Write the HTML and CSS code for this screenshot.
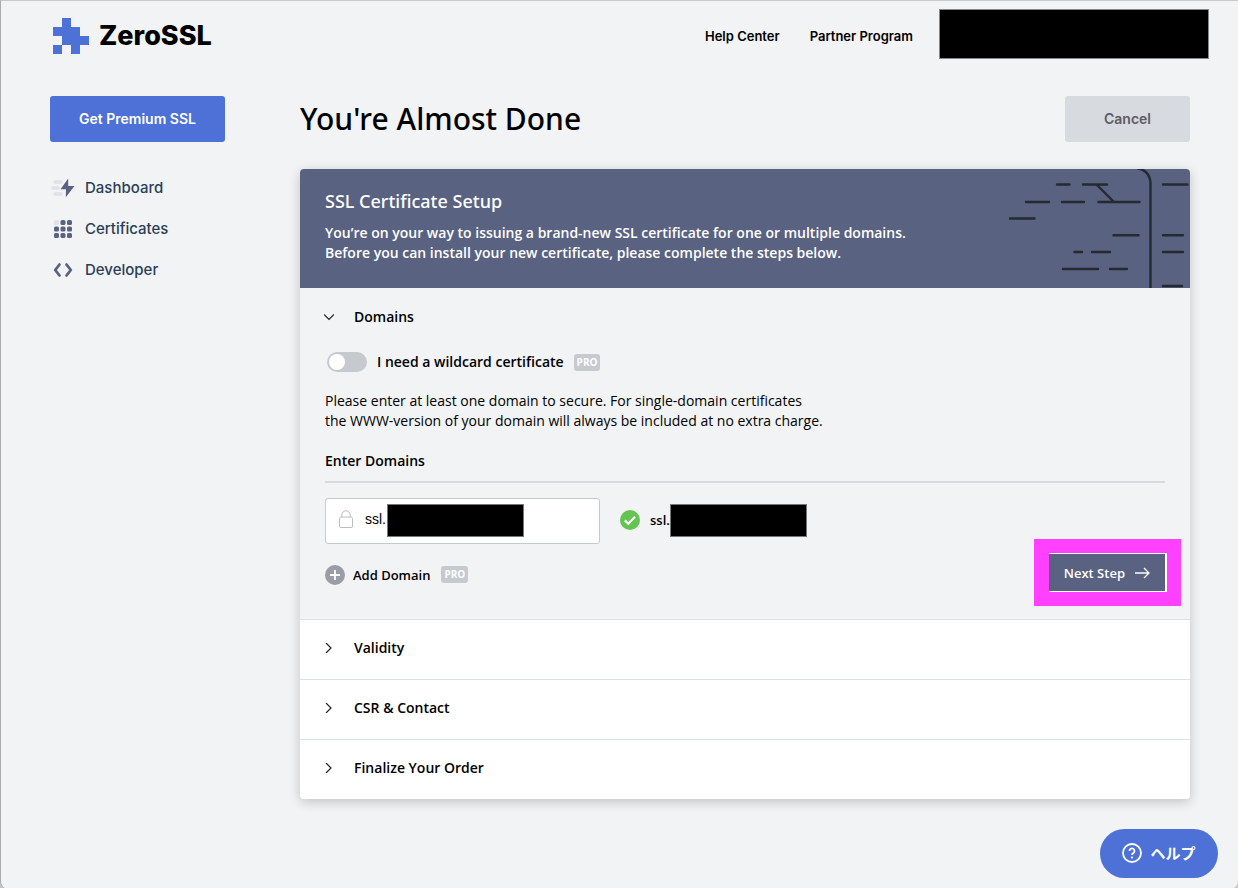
FILE: index.html
```
<!DOCTYPE html>
<html lang="en">
<head>
    <meta charset="UTF-8">
    <meta name="viewport" content="width=device-width, initial-scale=1.0">
    <link rel="stylesheet" href="styles.css">
    <title>ZeroSSL</title>
</head>
<body>
    <div class="window">
        <header class="topbar">
            <a href="#" class="logo">
                <svg width="37" height="36" viewBox="0 0 36 36" fill="#4d71d6" shape-rendering="crispEdges" aria-hidden="true">
                    <path d="M9 0h9v9h9v9h9v9h-9v9h-9v-9H9v-9H0V9h9zM0 27h9v9H0z"/>
                </svg>
                <span>ZeroSSL</span>
            </a>
            <nav class="top-nav">
                <a href="#">Help Center</a>
                <a href="#">Partner Program</a>
            </nav>
            <div class="account"></div>
        </header>

        <div class="content">
            <aside class="sidebar">
                <button class="btn btn-premium">Get Premium SSL</button>
                <nav class="side-nav">
                    <a href="#">
                        <svg width="24" height="20" viewBox="0 0 24 20" aria-hidden="true">
                            <path d="M4 4h6M2 10h5M4 16h6" stroke="#dee1e7" stroke-width="3.4" stroke-linecap="round"/>
                            <path d="M17.200 .5 9.500 11.200h5.500L14.800 19.200 23.500 8h-6.300z" fill="#596280"/>
                        </svg>
                        Dashboard
                    </a>
                    <a href="#">
                        <svg width="24" height="20" viewBox="0 0 24 20" fill="#596280" aria-hidden="true">
                            <rect x="3" y="1" width="5" height="5" rx="1.600" fill="#dee1e7"/>
                            <rect x="9.500" y="1" width="5" height="5" rx="1.600"/>
                            <rect x="16" y="1" width="5" height="5" rx="1.600"/>
                            <rect x="3" y="7.500" width="5" height="5" rx="1.600"/>
                            <rect x="9.500" y="7.500" width="5" height="5" rx="1.600"/>
                            <rect x="16" y="7.500" width="5" height="5" rx="1.600"/>
                            <rect x="3" y="14" width="5" height="5" rx="1.600"/>
                            <rect x="9.500" y="14" width="5" height="5" rx="1.600"/>
                            <rect x="16" y="14" width="5" height="5" rx="1.600"/>
                        </svg>
                        Certificates
                    </a>
                    <a href="#">
                        <svg width="24" height="20" viewBox="0 0 24 20" fill="none" stroke="#596280" stroke-width="2.800" stroke-linecap="round" stroke-linejoin="round" aria-hidden="true">
                            <path d="M8.500 4.500 4.200 10l4.300 5.500M15.500 4.500l4.300 5.500-4.300 5.500"/>
                        </svg>
                        Developer
                    </a>
                </nav>
            </aside>

            <main class="main">
                <div class="page-head">
                    <h1>You're Almost Done</h1>
                    <button class="btn btn-cancel">Cancel</button>
                </div>

                <section class="card">
                    <div class="card-head">
                        <svg class="card-art" width="190" height="119" viewBox="1000 169 190 119" fill="none" stroke="#252a31" stroke-width="2.400" stroke-linecap="round" aria-hidden="true">
                            <path d="M1057 184.500h12.500M1083 184.500h24M1163 184.500h24.500M1026 202h23M1062 202h22M1098.500 202h41M1010 218.500h24.500M1113.500 235.300h25M1163 235.300h20M1074.500 252h7.500M1092 252h18M1163 252h20M1063 269h35M1110 269h17M1163 286h19M1097 185l16.500 16.500"/>
                            <path d="M1138 168.500c7.500 1 12.500 7 12.500 15V290"/>
                        </svg>
                        <h2>SSL Certificate Setup</h2>
                        <p>You’re on your way to issuing a brand-new SSL certificate for one or multiple domains.<br>Before you can install your new certificate, please complete the steps below.</p>
                    </div>

                    <div class="step step-open">
                        <button class="step-title">
                            <svg width="10" height="10" viewBox="0 0 10 10" fill="none" stroke="#222" stroke-width="1.200" aria-hidden="true"><path d="M0 2.500l5 5 5-5"/></svg>
                            Domains
                        </button>
                        <div class="step-body">
                            <div class="wildcard">
                                <input type="checkbox" id="wildcard" class="toggle">
                                <label for="wildcard">I need a wildcard certificate</label>
                                <span class="pro">PRO</span>
                            </div>
                            <p class="hint">Please enter at least one domain to secure. For single-domain certificates<br>the WWW-version of your domain will always be included at no extra charge.</p>
                            <label class="field-title" for="domain">Enter Domains</label>
                            <div class="domain-row">
                                <div class="domain-field">
                                    <svg class="lock" width="14" height="18" viewBox="0 0 14 18" fill="none" stroke="#b9bcc7" aria-hidden="true">
                                        <rect x=".5" y="7" width="13" height="10.500" rx="1.500"/>
                                        <path d="M2.800 7V5a4.200 4.200 0 0 1 8.400 0v2"/>
                                    </svg>
                                    <input type="text" id="domain" value="ssl.">
                                    <span class="mask"></span>
                                </div>
                                <div class="domain-valid">
                                    <svg width="20" height="20" viewBox="0 0 20 20" fill="none" aria-hidden="true">
                                        <circle cx="10" cy="10" r="10" fill="#63c452"/>
                                        <path d="M4.800 10.400l3.500 3.400 6.700-7" stroke="#fff" stroke-width="2.200"/>
                                    </svg>
                                    <span>ssl.</span>
                                    <span class="mask"></span>
                                </div>
                            </div>
                            <div class="step-actions">
                                <div class="add-domain">
                                    <button class="btn-add">
                                        <svg width="20" height="20" viewBox="0 0 20 20" fill="none" aria-hidden="true">
                                            <circle cx="10" cy="10" r="10" fill="#9a9da5"/>
                                            <path d="M10 5v10M5 10h10" stroke="#fff" stroke-width="1.800"/>
                                        </svg>
                                        Add Domain
                                    </button>
                                    <span class="pro">PRO</span>
                                </div>
                                <button class="btn-next">
                                    Next Step
                                    <svg width="15" height="12" viewBox="0 0 15 12" fill="none" stroke="#fff" stroke-width="1.300" aria-hidden="true"><path d="M0 6h14M9 1l5 5-5 5"/></svg>
                                </button>
                            </div>
                        </div>
                    </div>

                    <div class="step">
                        <button class="step-title">
                            <svg width="10" height="10" viewBox="0 0 10 10" fill="none" stroke="#222" stroke-width="1.200" aria-hidden="true"><path d="M2 0l5 5-5 5"/></svg>
                            Validity
                        </button>
                    </div>
                    <div class="step">
                        <button class="step-title">
                            <svg width="10" height="10" viewBox="0 0 10 10" fill="none" stroke="#222" stroke-width="1.200" aria-hidden="true"><path d="M2 0l5 5-5 5"/></svg>
                            CSR &amp; Contact
                        </button>
                    </div>
                    <div class="step">
                        <button class="step-title">
                            <svg width="10" height="10" viewBox="0 0 10 10" fill="none" stroke="#222" stroke-width="1.200" aria-hidden="true"><path d="M2 0l5 5-5 5"/></svg>
                            Finalize Your Order
                        </button>
                    </div>
                </section>
            </main>
        </div>
    </div>

    <button class="help" lang="ja">
        <svg width="20" height="20" viewBox="0 0 20 20" fill="none" stroke="#fff" stroke-width="1.800" aria-hidden="true">
            <circle cx="10" cy="10" r="9"/>
            <path d="M7.500 8a2.500 2.500 0 1 1 3.800 2.100c-.9.500-1.300.9-1.300 1.900"/>
            <circle cx="10" cy="14.500" r="1.100" fill="#fff" stroke="none"/>
        </svg>
        ヘルプ
    </button>
</body>
</html>
```
FILE: styles.css
```
* {
    box-sizing: border-box;
}

body {
    margin: 0;
    background-color: #c5c6c9;
    font-family: 'Open Sans', sans-serif;
    font-size: 14px;
    line-height: 20px;
    color: #000;
}

button {
    font-family: inherit;
    border: none;
    cursor: pointer;
}

a {
    text-decoration: none;
}

h1, h2, p {
    margin: 0;
}

h1, h2 {
    font-family: 'Noto Sans', 'Open Sans', sans-serif;
    font-weight: 500;
}

svg {
    flex-shrink: 0;
}

.window {
    min-height: 100vh;
    background-color: #f1f3f5;
    border-top: 1px solid #c9cacc;
    border-left: 1px solid #a9aaad;
    border-radius: 0 0 8px 8px;
}

/* top bar */
.topbar {
    display: flex;
    align-items: center;
    padding: 8px 29px 0 51px;
    height: 62px;
    font-family: Inter, sans-serif;
}

.logo {
    display: flex;
    align-items: center;
    gap: 10px;
    margin-right: auto;
    color: #000;
    font-size: 27px;
    font-weight: 800;
}

.top-nav {
    display: flex;
    gap: 30px;
    margin-right: 26px;
}

.top-nav a {
    color: #000;
    font-size: 13px;
    font-weight: 600;
}

.account {
    align-self: flex-start;
    width: 270px;
    height: 50px;
    background-color: #000;
    border: 1px solid #888;
}

/* layout */
.content {
    display: flex;
    gap: 75px;
    padding: 33px 48px 90px 49px;
}

.sidebar {
    flex: 0 0 175px;
    font-family: Inter, sans-serif;
}

.main {
    flex: 1;
    min-width: 0;
}

.btn {
    height: 46px;
    padding: 0 0 2px;
    border-radius: 3px;
    font-family: Inter, sans-serif;
    font-size: 14px;
    font-weight: 600;
}

.btn-premium {
    width: 100%;
    background-color: #4d71d6;
    color: #fff;
}

.btn-cancel {
    width: 125px;
    background-color: #d7dadf;
    color: #5b5d62;
}

.side-nav {
    margin-top: 25px;
}

.side-nav a {
    display: flex;
    align-items: center;
    gap: 10px;
    height: 41px;
    padding-left: 1px;
    color: #2b3e55;
    font-size: 15px;
    font-weight: 500;
}

.page-head {
    display: flex;
    justify-content: space-between;
    align-items: center;
    margin-bottom: 27px;
}

h1 {
    font-size: 30px;
    line-height: 44px;
}

/* card */
.card {
    border-radius: 4px;
    background-color: #fff;
    box-shadow: 0 3px 12px rgba(0, 0, 0, 0.2);
    overflow: hidden;
}

.card-head {
    position: relative;
    padding: 20px 25px 25px;
    background-color: #596280;
    color: #fff;
}

.card-art {
    position: absolute;
    top: 0;
    right: 0;
}

.card-head h2 {
    margin-bottom: 9px;
    font-size: 18px;
    line-height: 25px;
}

.card-head p {
    font-weight: 600;
}

.step {
    border-top: 1px solid #dce0e7;
}

.step-title {
    display: flex;
    align-items: center;
    gap: 20px;
    width: 100%;
    height: 59px;
    padding: 0 25px 4px 24px;
    background: none;
    color: #000;
    font-size: 14px;
    font-weight: 600;
}

.step-open {
    border-top: none;
    background-color: #f1f3f5;
}

.step-open .step-title {
    padding-bottom: 2px;
}

.step-body {
    padding: 5px 25px 28px;
}

.wildcard {
    display: flex;
    align-items: center;
    gap: 10px;
    margin-bottom: 19px;
    padding-left: 2px;
    font-weight: 600;
}

.toggle {
    appearance: none;
    width: 40px;
    height: 20px;
    margin: 0;
    padding: 2px;
    border-radius: 10px;
    background-color: #c6c9cd;
}

.toggle::before {
    content: "";
    display: block;
    width: 16px;
    height: 16px;
    border-radius: 50%;
    background-color: #fff;
}

.toggle:checked::before {
    margin-left: auto;
}

.pro {
    padding: 0 3px;
    border-radius: 3px;
    background-color: #c6c9ce;
    color: #fff;
    font-size: 10px;
    line-height: 17px;
    font-weight: 700;
}

.field-title {
    display: block;
    margin: 20px 0 15px;
    padding-bottom: 10px;
    border-bottom: 2px solid #d8dadd;
    font-weight: 600;
}

.domain-row {
    display: flex;
    align-items: center;
    gap: 20px;
}

.domain-field {
    position: relative;
    width: 275px;
}

.domain-field input {
    display: block;
    width: 100%;
    height: 46px;
    padding: 0 20px 4px 39px;
    border: 1px solid #c6c9ce;
    border-radius: 3px;
    background-color: #fff;
    font-family: 'Liberation Sans', Arial, sans-serif;
    font-size: 14px;
}

.lock {
    position: absolute;
    top: 12px;
    left: 14px;
}

.mask {
    width: 137px;
    height: 33px;
    border: 1px solid #777;
    background-color: #000;
}

.domain-field .mask {
    position: absolute;
    top: 6px;
    left: 62px;
}

.domain-valid {
    display: flex;
    align-items: center;
    padding-bottom: 2px;
    font-size: 13px;
    font-weight: 600;
}

.domain-valid svg {
    margin-right: 10px;
}

.step-actions {
    display: flex;
    justify-content: space-between;
    align-items: center;
    margin-top: 10px;
}

.add-domain {
    display: flex;
    align-items: center;
    gap: 11px;
    padding-top: 4px;
}

.btn-add {
    display: flex;
    align-items: center;
    gap: 8px;
    padding: 0;
    background: none;
    color: #000;
    font-size: 13px;
    font-weight: 600;
}

.btn-next {
    display: flex;
    align-items: center;
    gap: 10px;
    height: 37px;
    padding: 0 15px;
    background-color: #596280;
    color: #fff;
    font-size: 13px;
    font-weight: 600;
    box-shadow: 1px 0 0 1px #fff, 0 0 0 15px #ff40ff, 1px 0 0 15px #ff40ff;
}

/* help launcher */
.help {
    position: fixed;
    right: 20px;
    bottom: 10px;
    display: flex;
    align-items: center;
    justify-content: center;
    gap: 8px;
    width: 118px;
    height: 49px;
    padding: 0 0 2px;
    border-radius: 25px;
    background-color: #4d71d6;
    color: #fff;
    font-family: 'Noto Sans CJK JP', sans-serif;
    font-size: 15px;
    font-weight: 700;
}
```
